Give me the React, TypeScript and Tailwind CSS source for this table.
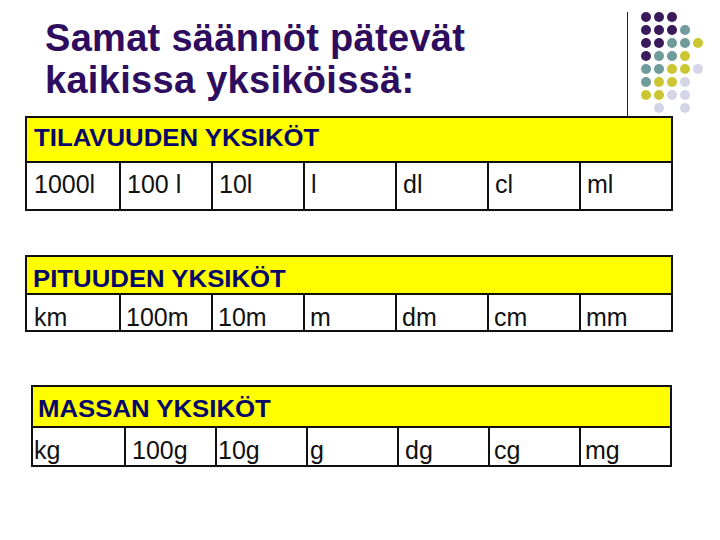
import React from 'react';

type UnitTable = {
  title: string;
  units: string[];
  pads: string[];
  wrap: string;
  headH: string;
  headPad: string;
  rowH: string;
  rowPad: string;
};

const P = 'bg-[#3b1a5c]';
const T = 'bg-[#6f9b9a]';
const Y = 'bg-[#cbc631]';
const L = 'bg-[#d6d5e8]';

// 5 columns x 8 rows of dots, '' = empty spot
const dots: string[][] = [
  [P, P, P, '', ''],
  [P, P, P, T, ''],
  [P, P, T, T, Y],
  [P, T, T, Y, ''],
  [T, T, Y, Y, L],
  [T, Y, Y, L, ''],
  [Y, Y, L, L, ''],
  ['', L, '', L, ''],
];

const tables: UnitTable[] = [
  {
    title: 'TILAVUUDEN YKSIKÖT',
    units: ['1000l', '100 l', '10l', 'l', 'dl', 'cl', 'ml'],
    pads: ['pl-[7px]', 'pl-[6px]', 'pl-[6px]', 'pl-[6px]', 'pl-[6px]', 'pl-[6px]', 'pl-[6px]'],
    wrap: 'ml-[25px] w-[648px]',
    headH: 'h-[45px]',
    headPad: 'pl-[7px] pt-[6px]',
    rowH: 'h-[46px]',
    rowPad: 'pt-[8px]',
  },
  {
    title: 'PITUUDEN YKSIKÖT',
    units: ['km', '100m', '10m', 'm', 'dm', 'cm', 'mm'],
    pads: ['pl-[7px]', 'pl-[5px]', 'pl-[5px]', 'pl-[5px]', 'pl-[5px]', 'pl-[5px]', 'pl-[5px]'],
    wrap: 'ml-[25px] w-[648px] mt-[44px]',
    headH: 'h-[38px]',
    headPad: 'pl-[6px] pt-[8px]',
    rowH: 'h-[35px]',
    rowPad: 'pt-[9px]',
  },
  {
    title: 'MASSAN YKSIKÖT',
    units: ['kg', '100g', '10g', 'g', 'dg', 'cg', 'mg'],
    pads: ['pl-[1px]', 'pl-[6px]', 'pl-[1px]', 'pl-[2px]', 'pl-[6px]', 'pl-[4px]', 'pl-[4px]'],
    wrap: 'ml-[31px] w-[641px] mt-[53px]',
    headH: 'h-[41px]',
    headPad: 'pl-[5px] pt-[8px]',
    rowH: 'h-[37px]',
    rowPad: 'pt-[9px]',
  },
];

function Table({ t }: { t: UnitTable }) {
  return (
    <div className={`${t.wrap} border-2 border-[#111]`}>
      <div className={`${t.headH} ${t.headPad} bg-[#ffff00] border-b-2 border-[#111] leading-[28px]`}>
        <span className="inline-block origin-left scale-x-[1.12] text-[23px] font-bold text-[#08086a]">{t.title}</span>
      </div>
      <div className={`grid grid-cols-7 ${t.rowH}`}>
        {t.units.map((u, i) => (
          <div
            key={u}
            className={`${i > 0 ? 'border-l-2 border-[#111]' : ''} ${t.pads[i]} ${t.rowPad} text-[25px] leading-[26px] text-[#111] whitespace-pre`}
          >
            {u}
          </div>
        ))}
      </div>
    </div>
  );
}

export default function App() {
  return (
    <div className="w-[720px] h-[540px] bg-white overflow-hidden font-['Liberation_Sans',Arial,sans-serif]">
      <div className="flex justify-between h-[116px]">
        <h1 className="pl-[45px] pt-[17px] text-[38px] leading-[42px] font-bold tracking-[0.3px] text-[#2e0d5e]">
          Samat säännöt pätevät
          <br />
          kaikissa yksiköissä:
        </h1>
        <div className="flex pr-[17px]">
          <div className="w-px bg-[#222] mt-[12px]" />
          <div className="ml-[13px] mt-[12px] grid grid-cols-5 gap-[3px] h-fit">
            {dots.flat().map((c, i) => (
              <div key={i} className={`w-[10px] h-[10px] rounded-full ${c}`} />
            ))}
          </div>
        </div>
      </div>
      {tables.map(t => (
        <Table key={t.title} t={t} />
      ))}
    </div>
  );
}
